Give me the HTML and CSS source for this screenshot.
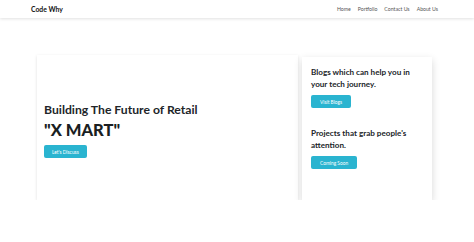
FILE: index.html
```html
<!DOCTYPE html>
<html>
<head>
<meta charset="utf-8">
<link rel="stylesheet" href="styles.css">
</head>
<body>
<nav class="navbar">
  <span class="brand">Code Why</span>
  <ul class="links">
    <li>Home</li>
    <li>Portfolio</li>
    <li>Contact Us</li>
    <li>About Us</li>
  </ul>
</nav>
<main class="main">
  <section class="hero">
    <h1 class="hero-title">Building The Future of Retail</h1>
    <h2 class="hero-name">"X MART"</h2>
    <button class="btn">Let's Discuss</button>
  </section>
  <aside class="side">
    <div class="block">
      <h3 class="side-title">Blogs which can help you in your tech journey.</h3>
      <button class="btn btn-side">Visit Blogs</button>
    </div>
    <div class="block">
      <h3 class="side-title">Projects that grab people's attention.</h3>
      <button class="btn btn-side">Coming Soon</button>
    </div>
  </aside>
</main>
</body>
</html>
```
FILE: styles.css
```css
* { box-sizing: border-box; }
body {
  margin: 0;
  background: #fff;
  font-family: Lato, "Open Sans", sans-serif;
  color: #212529;
}
.navbar {
  height: 18px;
  display: flex;
  align-items: center;
  justify-content: space-between;
  padding: 0 36px 0 31px;
  box-shadow: 0 1px 3px rgba(0,0,0,0.12);
}
.brand {
  font-weight: 700;
  font-size: 6.8px;
  color: #111;
}
.links {
  display: flex;
  gap: 7px;
  list-style: none;
  margin: 0;
  padding: 0;
  font-size: 5.2px;
  color: #555;
}
.main {
  display: flex;
  gap: 4px;
  padding: 37px 0 0 37px;
  align-items: flex-end;
}
.hero {
  width: 261px;
  height: 145px;
  padding: 5px 7px 0;
  display: flex;
  flex-direction: column;
  justify-content: center;
  align-items: flex-start;
  box-shadow: 0 1px 3px rgba(0,0,0,0.13);
}
.hero-title {
  margin: 0;
  font-size: 12.2px;
  font-weight: 700;
  line-height: 16px;
  color: #212529;
}
.hero-name {
  margin: 2px 0 4px;
  font-size: 16.5px;
  font-weight: 900;
  line-height: 21px;
  color: #1a1e22;
}
.btn {
  border: none;
  background: #2ab4d0;
  color: #fff;
  font-family: inherit;
  font-size: 4.8px;
  border-radius: 2px;
  height: 13px;
  padding: 0 8px;
}
.side {
  width: 130px;
  height: 143px;
  padding: 9px 9px 0;
  box-shadow: 0 3px 8px rgba(0,0,0,0.16);
}
.block {
  display: flex;
  flex-direction: column;
  align-items: flex-start;
  margin-bottom: 19px;
}
.side-title {
  margin: 0 0 5px;
  font-size: 8.1px;
  font-weight: 700;
  line-height: 12px;
  color: #212529;
}
.btn-side {
  font-size: 4.8px;
  padding: 0 9px;
}
```
